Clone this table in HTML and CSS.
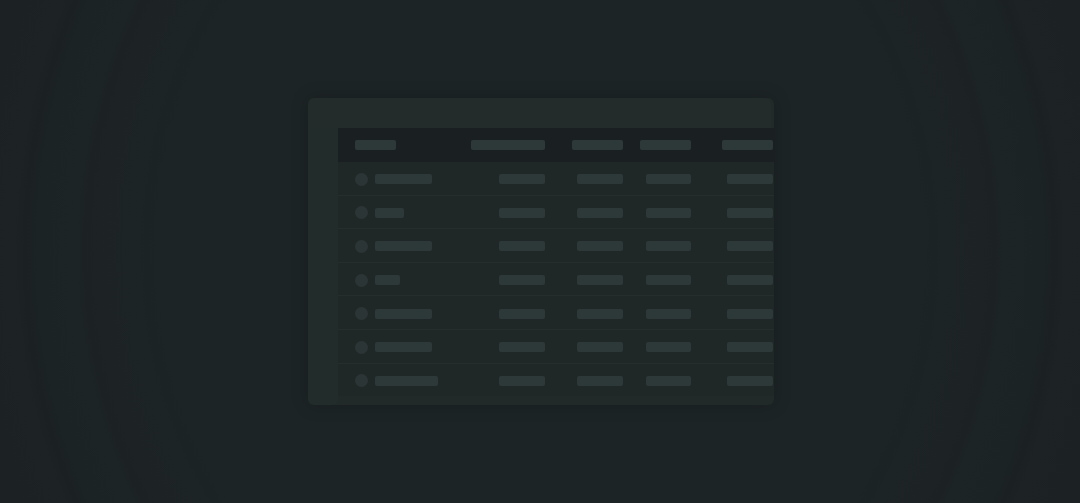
FILE: index.html
```html
<!DOCTYPE html>
<html lang="en">
<head>
<meta charset="utf-8">
<title>Loading table</title>
<link rel="stylesheet" href="styles.css">
</head>
<body>
<main class="stage">
  <section class="card">
    <div class="card-top"></div>
    <div class="card-body">
      <aside class="sidebar"></aside>
      <div class="table">
        <div class="thead">
          <span class="bar w41"></span>
          <span class="bar w74"></span>
          <span class="bar w51"></span>
          <span class="bar w51"></span>
          <span class="bar w51"></span>
        </div>
        <div class="row"><div class="name"><span class="dot"></span><span class="bar w57"></span></div><span class="bar w46"></span><span class="bar w46"></span><span class="bar w45"></span><span class="bar w46"></span></div>
        <div class="row"><div class="name"><span class="dot"></span><span class="bar w29"></span></div><span class="bar w46"></span><span class="bar w46"></span><span class="bar w45"></span><span class="bar w46"></span></div>
        <div class="row"><div class="name"><span class="dot"></span><span class="bar w57"></span></div><span class="bar w46"></span><span class="bar w46"></span><span class="bar w45"></span><span class="bar w46"></span></div>
        <div class="row"><div class="name"><span class="dot"></span><span class="bar w25"></span></div><span class="bar w46"></span><span class="bar w46"></span><span class="bar w45"></span><span class="bar w46"></span></div>
        <div class="row"><div class="name"><span class="dot"></span><span class="bar w57"></span></div><span class="bar w46"></span><span class="bar w46"></span><span class="bar w45"></span><span class="bar w46"></span></div>
        <div class="row"><div class="name"><span class="dot"></span><span class="bar w57"></span></div><span class="bar w46"></span><span class="bar w46"></span><span class="bar w45"></span><span class="bar w46"></span></div>
        <div class="row last"><div class="name"><span class="dot"></span><span class="bar w63"></span></div><span class="bar w46"></span><span class="bar w46"></span><span class="bar w45"></span><span class="bar w46"></span></div>
      </div>
    </div>
  </section>
</main>
</body>
</html>
```

FILE: styles.css
```css
html, body {
  margin: 0;
  padding: 0;
}

body {
  width: 1080px;
  height: 503px;
  overflow: hidden;
  font-family: "Liberation Sans", Arial, sans-serif;
  background-color: #1c2223;
  background-image: radial-gradient(ellipse 515px 580px at 540px 251px,
    #1d2425 0%, #1d2425 74%,
    #1c2324 76.7%, #1d2425 78%,
    #1d2324 86%, #1c2223 88.3%, #1d2425 90%,
    #1c2324 97.5%, #1b2122 100%, #1d2324 102%, #1c2223 110%);
}

.stage {
  width: 1080px;
  height: 503px;
  display: flex;
  align-items: center;
  justify-content: center;
}

.card {
  width: 466px;
  height: 307px;
  margin-left: 2px;
  display: flex;
  flex-direction: column;
  background: #212a29;
  border-radius: 6px;
  overflow: hidden;
  box-shadow: 0 0 18px rgba(0, 0, 0, 0.18);
  filter: blur(0.7px);
}

.card-top {
  height: 30px;
  flex: none;
  background: #232c2b;
  margin-right: 3px;
  border-radius: 6px 6px 0 0;
}

.card-body {
  flex: 1;
  display: flex;
  min-height: 0;
}

.sidebar {
  width: 30px;
  flex: none;
  background: #222c2b;
  border-radius: 0 0 5px 5px;
}

.table {
  flex: 1;
  display: flex;
  flex-direction: column;
}

.thead,
.row {
  display: grid;
  grid-template-columns: 116px 74px 78px 68px 82px;
  align-items: center;
  justify-items: end;
  padding: 0 1px 0 17px;
}

.thead {
  height: 34px;
  background: #1a2021;
}

.thead .bar:first-child {
  justify-self: start;
}

.row {
  height: 33.6px;
  box-sizing: border-box;
  padding-top: 2px;
  border-bottom: 1px solid #252e2d;
  background: #202827;
}

.row.last {
  border-bottom-color: #222a29;
}

.name {
  justify-self: start;
  display: flex;
  align-items: center;
  gap: 7px;
}

.dot {
  width: 13px;
  height: 13px;
  border-radius: 50%;
  background: #2c3536;
}

.bar {
  display: block;
  height: 10px;
  border-radius: 2px;
  background: #2d3839;
}

.w25 { width: 25px; }
.w29 { width: 29px; }
.w41 { width: 41px; }
.w45 { width: 45px; }
.w46 { width: 46px; }
.w51 { width: 51px; }
.w57 { width: 57px; }
.w63 { width: 63px; }
.w74 { width: 74px; }
```
